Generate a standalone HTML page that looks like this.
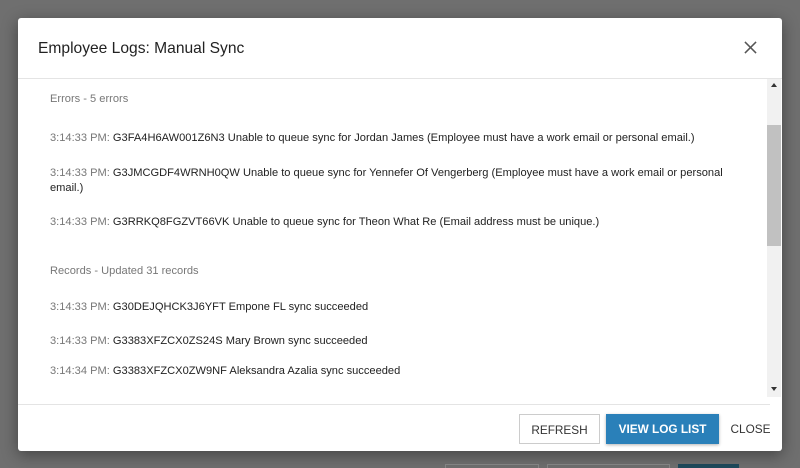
<!DOCTYPE html>
<html><head><style>
html,body{margin:0;width:800px;height:468px;overflow:hidden}
body{background:#6f6f6f;font-family:"Liberation Sans",sans-serif;position:relative}
.bg{position:absolute;top:464px;height:4px;border:1px solid #888;border-bottom:0;background:#6f6f6f}
.dlg{position:absolute;left:18px;top:18px;width:764px;height:433px;background:#fff;border-radius:3px;box-shadow:0 4px 16px rgba(0,0,0,.4)}
.title{position:absolute;left:20px;top:22px;font-size:15.6px;color:#222}
.x{position:absolute;left:726px;top:23px}
.hl{position:absolute;left:0;right:0;top:60px;border-top:1px solid #e4e4e4}
.fl{position:absolute;left:0;right:12px;top:386px;border-top:1px solid #e4e4e4}
.t{position:absolute;left:32px;font-size:11.1px;color:#222;white-space:nowrap;line-height:15px}
.g{color:#777}
.sb{position:absolute;left:749px;top:61px;width:14px;height:318px;background:#f1f1f1}
.th{position:absolute;left:749px;top:107px;width:14px;height:121px;background:#c1c1c1}
.btn{position:absolute;top:396px;height:30px;line-height:30px;font-size:11.8px;text-align:center;box-sizing:border-box}
</style></head><body>
<div class="bg" style="left:445px;width:92px"></div>
<div class="bg" style="left:547px;width:121px"></div>
<div class="bg" style="left:678px;width:59px;background:#1f4a5c;border-color:#1f4a5c"></div>
<div class="dlg">
<div class="title">Employee Logs: Manual Sync</div>
<svg class="x" width="13" height="13" viewBox="0 0 14 14"><path d="M1 1L13 13M13 1L1 13" stroke="#555" stroke-width="1.6"/></svg>
<div class="hl"></div>
<div class="t g" style="top:74px">Errors - 5 errors</div>
<div class="t" style="top:113px"><span class="g">3:14:33 PM:</span> G3FA4H6AW001Z6N3 Unable to queue sync for Jordan James (Employee must have a work email or personal email.)</div>
<div class="t" style="top:148px"><span class="g">3:14:33 PM:</span> G3JMCGDF4WRNH0QW Unable to queue sync for Yennefer Of Vengerberg (Employee must have a work email or personal<br>email.)</div>
<div class="t" style="top:197px"><span class="g">3:14:33 PM:</span> G3RRKQ8FGZVT66VK Unable to queue sync for Theon What Re (Email address must be unique.)</div>
<div class="t g" style="top:246px">Records - Updated 31 records</div>
<div class="t" style="top:282px"><span class="g">3:14:33 PM:</span> G30DEJQHCK3J6YFT Empone FL sync succeeded</div>
<div class="t" style="top:316px"><span class="g">3:14:33 PM:</span> G3383XFZCX0ZS24S Mary Brown sync succeeded</div>
<div class="t" style="top:346px"><span class="g">3:14:34 PM:</span> G3383XFZCX0ZW9NF Aleksandra Azalia sync succeeded</div>
<div class="sb"></div><div class="th"></div>
<svg style="position:absolute;left:752px;top:64px" width="8" height="6"><path d="M1 5L4 1L7 5Z" fill="#333"/></svg>
<svg style="position:absolute;left:752px;top:368px" width="8" height="6"><path d="M1 1L4 5L7 1Z" fill="#333"/></svg>
<div class="fl"></div>
<div class="btn" style="left:501px;width:81px;border:1px solid #ccc;color:#333">REFRESH</div>
<div class="btn" style="left:588px;width:113px;background:#2a80b9;color:#fff;font-weight:bold;box-shadow:0 1px 3px rgba(0,0,0,.3)">VIEW LOG LIST</div>
<div class="btn" style="left:708px;width:49px;color:#333">CLOSE</div>
</div>
</body></html>
